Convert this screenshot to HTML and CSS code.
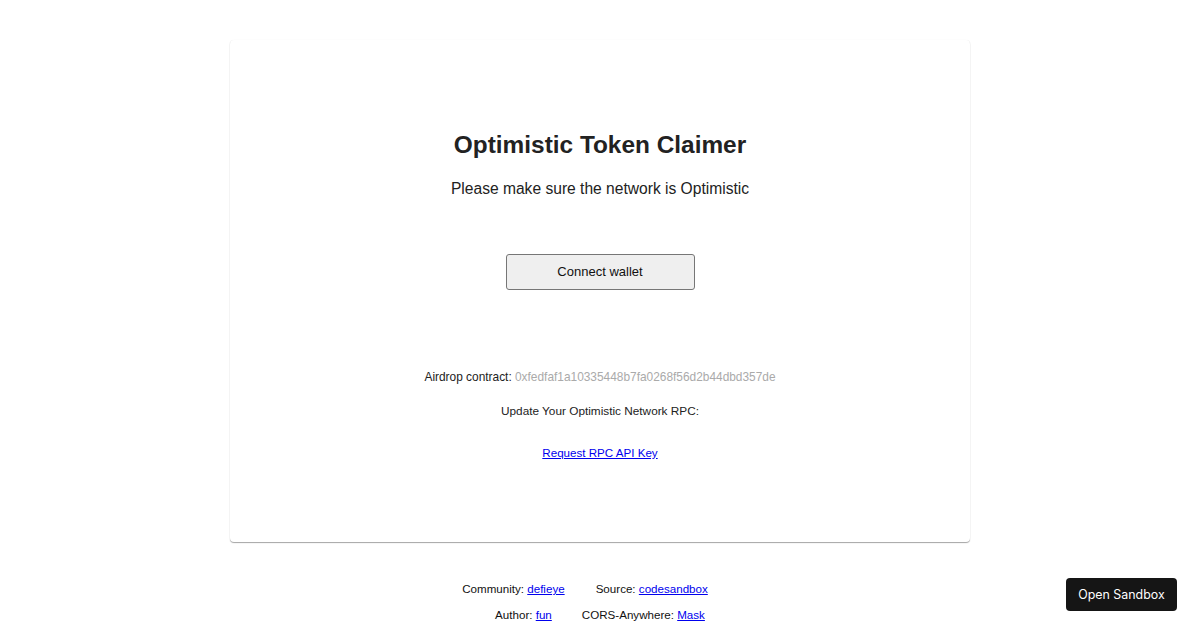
FILE: index.html
```html
<!DOCTYPE html>
<html>
<head>
<meta charset="utf-8">
<link rel="stylesheet" href="styles.css">
</head>
<body>
<div class="page">
  <div class="card">
    <h1 class="title">Optimistic Token Claimer</h1>
    <p class="subtitle">Please make sure the network is Optimistic</p>
    <button class="connect">Connect wallet</button>
    <p class="contract">Airdrop contract: <span class="hash">0xfedfaf1a10335448b7fa0268f56d2b44dbd357de</span></p>
    <p class="rpc">Update Your Optimistic Network RPC:</p>
    <p class="request"><a href="#">Request RPC API Key</a></p>
  </div>
  <div class="footer">
    <div class="frow first">
      <span>Community: <a href="#">defieye</a></span>
      <span>Source: <a href="#">codesandbox</a></span>
    </div>
    <div class="frow">
      <span>Author: <a href="#">fun</a></span>
      <span>CORS-Anywhere: <a href="#">Mask</a></span>
    </div>
  </div>
</div>
<button class="sandbox">Open Sandbox</button>
</body>
</html>
```
FILE: styles.css
```css
html, body { margin: 0; padding: 0; background: #fff; }
body { font-family: "Liberation Sans", Arial, sans-serif; color: #222; }
.page { display: flex; flex-direction: column; align-items: center; padding-top: 40px; }
.card {
  width: 740px; height: 502px; box-sizing: border-box;
  background: #fff; border-radius: 4px;
  box-shadow: 0 1px 1px rgba(0,0,0,0.35), 0 0 1px rgba(0,0,0,0.08);
  display: flex; flex-direction: column; align-items: center;
  padding-top: 91px;
}
.title { margin: 0; font-size: 24.4px; line-height: 28px; font-weight: bold; color: #222; }
.subtitle { margin: 20px 0 0; font-size: 15.6px; line-height: 19px; color: #222; }
.connect {
  margin-top: 56px; width: 189px; height: 36px; padding-bottom: 2px;
  background: #efefef; border: 1px solid #767676; border-radius: 3px;
  font-family: "Liberation Sans", Arial, sans-serif; font-size: 13px; color: #111;
}
.contract { margin: 80px 0 0; font-size: 11.9px; line-height: 14px; color: #222; }
.hash { color: #aaa; }
.rpc { margin: 20px 0 0; font-size: 11.8px; line-height: 14px; color: #222; }
.request { margin: 28px 0 0; font-size: 11.6px; line-height: 14px; }
a { color: #0000ee; }
.footer { margin-top: 40px; display: flex; flex-direction: column; align-items: center; gap: 12px; font-size: 11.6px; line-height: 14px; color: #111; }
.frow { display: flex; gap: 30px; }
.frow.first { gap: 31px; padding-right: 30px; }
.sandbox {
  position: fixed; right: 23px; bottom: 19px;
  width: 111px; height: 33px; border: none; border-radius: 4px;
  background: #151515; color: #fff;
  font-family: "Inter", "Liberation Sans", sans-serif; font-size: 12.4px;
}
```
